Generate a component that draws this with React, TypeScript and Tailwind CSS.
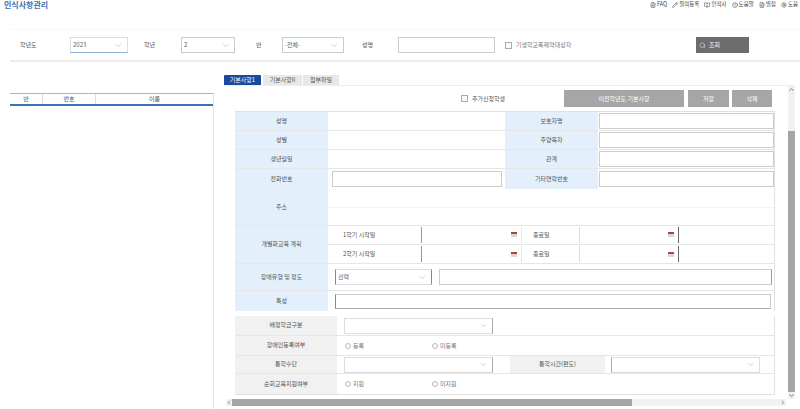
import { ChevronDown, ChevronUp, ChevronLeft, ChevronRight, Search, Pencil, BookOpen, HelpCircle, FileText, Settings } from "lucide-react";
import type { ReactNode } from "react";

const Chev = () => <ChevronDown className="ml-auto mr-[2px] w-[9px] h-[9px] text-[#aaa] shrink-0" strokeWidth={1.5} />;

function Sel({ w, value, tone = "border-[#ccc]" }: { w: string; value?: string; tone?: string }) {
  return (
    <div className={`${w} h-[16px] flex items-center bg-white border ${tone} px-[2px] text-[#666]`}>
      {value && <span>{value}</span>}
      <Chev />
    </div>
  );
}

function Label({ w, children, gray }: { w: string; children: ReactNode; gray?: boolean }) {
  return <div className={`${w} shrink-0 self-stretch flex items-center justify-center ${gray ? "bg-[#f1f1f1]" : "bg-[#e3f0fb]"} text-[#555] pb-[1px]`}>{children}</div>;
}

function Row({ h, children, line = true }: { h: string; children: ReactNode; line?: boolean }) {
  return <div className={`${h} flex items-center ${line ? "border-b border-[#e6e6e6]" : ""}`}>{children}</div>;
}

const Input = ({ w, h = "h-[16px]", cls = "" }: { w: string; h?: string; cls?: string }) => <div className={`${w} ${h} bg-white border border-[#ccc] ${cls}`} />;

const Cal = () => (
  <svg viewBox="0 0 6 5" className="ml-auto mr-[4px] w-[6px] h-[5px]">
    <rect x="0" y="0" width="6" height="2" fill="#b5403f" />
    <rect x="0" y="2" width="6" height="3" fill="#d8d8d8" />
  </svg>
);

function DateRow({ label, line }: { label: string; line?: boolean }) {
  return (
    <div className={`h-[19px] flex items-center ${line ? "border-b border-[#e6e6e6]" : ""}`}>
      <span className="w-[93px] pl-[15px] shrink-0 text-[#555]">{label}</span>
      <div className="w-[101px] h-[16px] flex items-center border-l border-[#999] border-r border-r-[#e5e5e5]"><Cal /></div>
      <span className="ml-[11px] w-[46px] text-[#555]">종료일</span>
      <div className="w-[100px] h-[16px] flex items-center border-l border-[#ddd] border-r border-r-[#666]"><Cal /></div>
    </div>
  );
}

function Radio({ label, w }: { label: string; w: string }) {
  return (
    <div className={`${w} flex items-center gap-[2px] text-[#777]`}>
      <span className="w-[6px] h-[6px] rounded-full border border-[#bbb]" />
      <span>{label}</span>
    </div>
  );
}

function Tool({ icon, text }: { icon: ReactNode; text: string }) {
  return <span className="flex items-center gap-[1px] shrink-0">{icon}{text}</span>;
}

export default function App() {
  const ic = "w-[6px] h-[6px]";
  return (
    <div className="w-[800px] h-[409px] overflow-hidden bg-white flex flex-col text-[6px] leading-none text-[#555] font-['Noto_Sans_CJK_KR','Liberation_Sans',sans-serif]">
      <header className="h-[29px] shrink-0 flex items-start justify-between pl-[4px]">
        <h1 className="text-[8px] leading-[10px] font-bold text-[#3f6fb5]">인식사항관리</h1>
        <nav className="flex gap-[5px] pt-[2px] w-[150px] text-[#444] text-[5.5px]">
          <Tool icon={<FileText className={ic} />} text="FAQ" />
          <Tool icon={<Pencil className={ic} />} text="질의등록" />
          <Tool icon={<BookOpen className={ic} />} text="인적사" />
          <Tool icon={<HelpCircle className={ic} />} text="도움말" />
          <Tool icon={<FileText className={ic} />} text="별첨" />
          <Tool icon={<Settings className={ic} />} text="도움" />
        </nav>
      </header>

      <section className="ml-[10px] h-[33px] shrink-0 flex items-center border-b-2 border-[#ececec] border-t border-t-[#f8f8f8] bg-white">
        <span className="ml-[10px] w-[50px]">학년도</span>
        <Sel w="w-[58px]" value="2023" tone="border-[#dcdcdc] border-b-[#8fb0d8]" />
        <span className="ml-[16px] w-[37px]">학년</span>
        <Sel w="w-[54px]" value="2" tone="border-[#ccc]" />
        <span className="ml-[21px] w-[26px]">반</span>
        <Sel w="w-[62px]" value="-전체-" tone="border-[#ccc]" />
        <span className="ml-[18px] w-[36px]">성명</span>
        <Input w="w-[97px]" cls="border-[#bbb]" />
        <span className="ml-[10px] w-[7px] h-[7px] border border-[#aaa] bg-[#fafafa]" />
        <span className="ml-[4px] w-[180px] text-[#777]">기생학교폭제약대상자</span>
        <button className="w-[53px] h-[16px] bg-[#6d6d6d] text-white flex items-center gap-[3px] pl-[3px]">
          <Search className="w-[7px] h-[7px]" strokeWidth={1.5} />
          <span>조회</span>
        </button>
      </section>

      <main className="flex-1 flex min-h-0">
        <aside className="ml-[10px] w-[204px] shrink-0 mt-[31px] border-r border-[#e5e5e5] border-t border-t-[#9db8d8]">
          <div className="h-[12px] flex items-center border-b-2 border-[#3e70b5] text-center">
            <span className="w-[33px] border-r border-[#ddd] h-full flex items-center justify-center">반</span>
            <span className="w-[53px] border-r border-[#ddd] h-full flex items-center justify-center">번호</span>
            <span className="flex-1">이름</span>
          </div>
        </aside>

        <div className="ml-[10px] w-[571px] shrink-0 flex flex-col mt-[13px]">
          <div className="h-[10px] flex shrink-0 border-b border-[#eee] box-content">
            <span className="w-[37px] bg-[#1a4a9c] text-white flex items-center justify-center rounded-t-[1px]">기본사항1</span>
            <span className="ml-[2px] w-[39px] bg-[#e8e8e8] flex items-center justify-center">기본사항II</span>
            <span className="ml-[1px] w-[36px] bg-[#e8e8e8] flex items-center justify-center">첨부파일</span>
          </div>

          <div className="flex h-[313px] shrink-0">
            <div className="w-[564px] pl-[11px] pr-[13px]">
              <div className="h-[25px] flex items-center">
                <span className="ml-[226px] w-[7px] h-[7px] border border-[#aaa] bg-[#fafafa]" />
                <span className="ml-[4px] w-[92px]">추가신청학생</span>
                <div className="w-[120px] h-[17px] bg-[#a6a6a6] text-white flex items-center justify-center">이전학년도 기본사항</div>
                <div className="ml-[4px] w-[41px] h-[17px] bg-[#a6a6a6] text-white flex items-center justify-center">저장</div>
                <div className="ml-[3px] w-[40px] h-[17px] bg-[#a6a6a6] text-white flex items-center justify-center">삭제</div>
              </div>

              <div className="border-t border-r border-[#e0e0e0]">
                <Row h="h-[19px]">
                  <Label w="w-[93px]">성명</Label>
                  <div className="w-[177px]" />
                  <Label w="w-[93px]">보호자명</Label>
                  <Input w="ml-[1px] w-[175px]" />
                </Row>
                <Row h="h-[19px]">
                  <Label w="w-[93px]">성별</Label>
                  <div className="w-[177px]" />
                  <Label w="w-[93px]">주양육자</Label>
                  <Input w="ml-[1px] w-[175px]" cls="border-[#bbb]" />
                </Row>
                <Row h="h-[19px]">
                  <Label w="w-[93px]">생년월일</Label>
                  <div className="w-[177px]" />
                  <Label w="w-[93px]">관계</Label>
                  <Input w="ml-[1px] w-[175px]" />
                </Row>
                <Row h="h-[20px]" line={false}>
                  <Label w="w-[93px]">전화번호</Label>
                  <Input w="ml-[4px] w-[170px]" />
                  <div className="w-[3px]" />
                  <Label w="w-[93px]">기타연락번호</Label>
                  <Input w="ml-[1px] w-[175px]" />
                </Row>
                <Row h="h-[37px]">
                  <Label w="w-[93px]">주소</Label>
                  <div className="flex-1 self-stretch flex items-center"><div className="w-full border-b border-[#f3f3f3]" /></div>
                </Row>
                <Row h="h-[38px]">
                  <Label w="w-[93px]">개별화교육 계획</Label>
                  <div className="flex-1">
                    <DateRow label="1학기 시작일" line />
                    <DateRow label="2학기 시작일" />
                  </div>
                </Row>
                <Row h="h-[27px]">
                  <Label w="w-[93px]">장애유형 및 정도</Label>
                  <Sel w="ml-[7px] w-[97px]" value="선택" tone="border-[#ddd] border-l-[#888] border-r-[#888]" />
                  <Input w="ml-[7px] w-[333px]" cls="border-r-[#999]" />
                </Row>
                <Row h="h-[20px]" line={false}>
                  <Label w="w-[93px]">특성</Label>
                  <Input w="ml-[7px] w-[436px]" h="h-[15px]" cls="border-l-[#888] border-b-[#aaa]" />
                </Row>
              </div>

              <div className="mt-[5px] border-r border-b border-[#e0e0e0]">
                <Row h="h-[20px]">
                  <Label w="w-[102px]" gray>배정학급구분</Label>
                  <Sel w="ml-[7px] w-[149px]" tone="border-[#ddd] border-r-[#aaa]" />
                </Row>
                <Row h="h-[20px]">
                  <Label w="w-[102px]" gray>장애인등록여부</Label>
                  <Radio w="ml-[8px] w-[87px]" label="등록" />
                  <Radio w="" label="미등록" />
                </Row>
                <Row h="h-[18px]">
                  <Label w="w-[102px]" gray>통학수단</Label>
                  <Sel w="ml-[7px] w-[149px]" tone="border-[#ddd] border-r-[#aaa]" />
                  <div className="w-[17px]" />
                  <Label w="w-[95px]" gray>통학시간(편도)</Label>
                  <Sel w="ml-[6px] w-[149px]" tone="border-[#ddd] border-l-[#aaa]" />
                </Row>
                <Row h="h-[20px]" line={false}>
                  <Label w="w-[102px]" gray>순회교육지원여부</Label>
                  <Radio w="ml-[8px] w-[87px]" label="지원" />
                  <Radio w="" label="미지원" />
                </Row>
              </div>
            </div>

            <div className="w-[7px] flex flex-col bg-[#f1f1f1] items-center">
              <ChevronUp className="w-[7px] h-[7px] text-[#3e70b5] shrink-0" strokeWidth={3} />
              <div className="mt-[38px] w-full h-[262px] bg-[#a6a6a6]" />
              <ChevronDown className="w-[7px] h-[7px] text-[#3e70b5] shrink-0" strokeWidth={3} />
            </div>
          </div>

          <div className="ml-[2px] w-[560px] h-[7px] flex items-center bg-[#f1f1f1]">
            <ChevronLeft className="w-[6px] h-[7px] text-[#3e70b5] shrink-0" strokeWidth={3} />
            <div className="w-[400px] h-full bg-[#a6a6a6]" />
            <ChevronRight className="ml-auto w-[6px] h-[7px] text-[#3e70b5] shrink-0" strokeWidth={3} />
          </div>
        </div>
      </main>
    </div>
  );
}
